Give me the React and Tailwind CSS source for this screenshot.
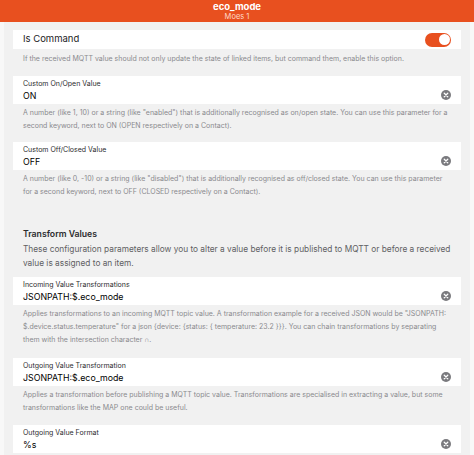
const ClearIcon = () => (
  <svg width="10" height="10" viewBox="0 0 20 20" className="shrink-0">
    <circle cx="10" cy="10" r="10" fill="#7a7a7e" />
    <path d="M6.5 6.5 L13.5 13.5 M13.5 6.5 L6.5 13.5" stroke="#fff" strokeWidth="2.6" strokeLinecap="round" />
  </svg>
)

const Toggle = () => (
  <div className="w-[26px] h-[14px] rounded-full bg-[#e8501f] flex items-center justify-end px-[1.5px]">
    <div className="w-[11px] h-[11px] rounded-full bg-white" />
  </div>
)

const Field = ({ label, value }) => (
  <div className="bg-white h-[28px] px-[10px] flex flex-col justify-center">
    <div className="text-[7px] leading-[10px] text-[#2c2c2e]">{label}</div>
    <div className="flex items-center justify-between">
      <span className="text-[8.8px] leading-[13px] text-black">{value}</span>
      <ClearIcon />
    </div>
  </div>
)

const Hint = ({ children, className = '' }) => (
  <p className={`px-[10px] text-[7px] leading-[13px] text-[#8a8a8e] ${className}`}>{children}</p>
)

const incomingHint =
  'Applies transformations to an incoming MQTT topic value. A transformation example for a received JSON would be "JSONPATH: $.device.status.temperature" for a json {device: {status: { temperature: 23.2 }}}. You can chain transformations by separating them with the intersection character ∩.'

export default function App() {
  return (
    <div className="w-[474px] h-[455px] overflow-hidden bg-[#f8f8f8] font-['Inter',sans-serif]">
      <div className="h-[22px] bg-[#e8501f] flex flex-col items-center justify-center text-white">
        <div className="text-[9.5px] leading-[11px] font-bold">eco_mode</div>
        <div className="text-[7.5px] leading-[9px] text-[#ffd9c9]">Moes 1</div>
      </div>

      <div className="mx-[4px] bg-[#f1f1f1] h-full px-[9px] pt-[8px]">
        <div className="bg-white h-[19px] px-[10px] flex items-center justify-between">
          <span className="text-[9.5px] text-[#1c1c1e]">Is Command</span>
          <Toggle />
        </div>
        <Hint className="mt-[3px]">
          If the received MQTT value should not only update the state of linked items, but command them, enable this option.
        </Hint>

        <div className="mt-[11px]">
          <Field label="Custom On/Open Value" value="ON" />
        </div>
        <Hint className="mt-[2px]">
          A number (like 1, 10) or a string (like "enabled") that is additionally recognised as on/open state. You can use this parameter for a second keyword, next to ON (OPEN respectively on a Contact).
        </Hint>

        <div className="mt-[10px]">
          <Field label="Custom Off/Closed Value" value="OFF" />
        </div>
        <Hint className="mt-[2px]">
          A number (like 0, -10) or a string (like "disabled") that is additionally recognised as off/closed state. You can use this parameter for a second keyword, next to OFF (CLOSED respectively on a Contact).
        </Hint>

        <div className="mt-[30px] px-[10px]">
          <div className="text-[8.7px] leading-[12px] font-semibold text-[#2c2c2e]">Transform Values</div>
          <p className="mt-[2px] text-[8.3px] leading-[14px] text-[#5f5f63]">
            These configuration parameters allow you to alter a value before it is published to MQTT or before a received value is assigned to an item.
          </p>
        </div>

        <div className="mt-[7px]">
          <Field label="Incoming Value Transformations" value="JSONPATH:$.eco_mode" />
        </div>
        <Hint className="mt-[2px]">{incomingHint}</Hint>

        <div className="mt-[12px]">
          <Field label="Outgoing Value Transformation" value="JSONPATH:$.eco_mode" />
        </div>
        <Hint className="mt-[2px]">
          Applies a transformation before publishing a MQTT topic value. Transformations are specialised in extracting a value, but some transformations like the MAP one could be useful.
        </Hint>

        <div className="mt-[11px]">
          <Field label="Outgoing Value Format" value="%s" />
        </div>
      </div>
    </div>
  )
}
